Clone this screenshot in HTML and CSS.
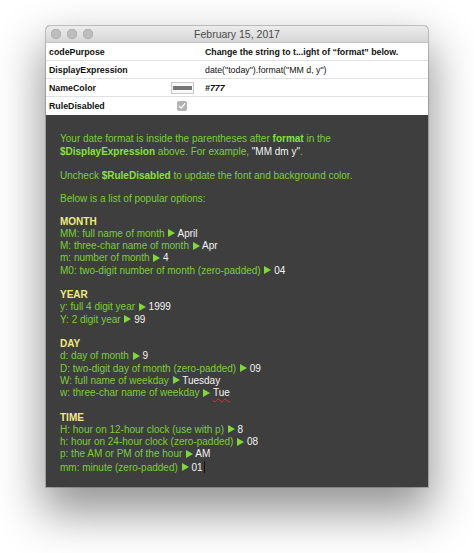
FILE: index.html
```html
<!DOCTYPE html>
<html>
<head>
<meta charset="utf-8">
<link rel="stylesheet" href="styles.css">
</head>
<body>
<div class="window">
  <div class="titlebar">
    <div class="lights"><span class="light"></span><span class="light"></span><span class="light"></span></div>
    <div class="title">February 15, 2017</div>
  </div>
  <div class="table">
    <div class="row">
      <div class="key">codePurpose</div>
      <div class="mid"></div>
      <div class="val bold">Change the string to t...ight of “format” below.</div>
    </div>
    <div class="row">
      <div class="key">DisplayExpression</div>
      <div class="mid"></div>
      <div class="val">date("today").format("MM d, y")</div>
    </div>
    <div class="row">
      <div class="key">NameColor</div>
      <div class="mid"><span class="swatch"><span class="swatch-fill"></span></span></div>
      <div class="val bold italic">#777</div>
    </div>
    <div class="row">
      <div class="key">RuleDisabled</div>
      <div class="mid"><span class="check"><svg width="8" height="8" viewBox="0 0 8 8"><path d="M1.3 4.2 L3.2 6.1 L6.8 1.6" fill="none" stroke="#fff" stroke-width="1.3" stroke-linecap="round" stroke-linejoin="round"/></svg></span></div>
      <div class="val"></div>
    </div>
  </div>
  <div class="note">
    <p class="para">Your date format is inside the parentheses after <b>format</b> in the<br><b>$DisplayExpression</b> above. For example, <span class="w">"MM dm y"</span>.</p>
    <p class="para">Uncheck <b>$RuleDisabled</b> to update the font and background color.</p>
    <p class="para">Below is a list of popular options:</p>

    <div class="group">
      <div class="head">MONTH</div>
      <div>MM: full name of month <span class="tri"></span> <span class="w">April</span></div>
      <div>M: three-char name of month <span class="tri"></span> <span class="w">Apr</span></div>
      <div>m: number of month <span class="tri"></span> <span class="w">4</span></div>
      <div>M0: two-digit number of month (zero-padded) <span class="tri"></span> <span class="w">04</span></div>
    </div>
    <div class="group">
      <div class="head">YEAR</div>
      <div>y: full 4 digit year <span class="tri"></span> <span class="w">1999</span></div>
      <div>Y: 2 digit year <span class="tri"></span> <span class="w">99</span></div>
    </div>
    <div class="group">
      <div class="head">DAY</div>
      <div>d: day of month <span class="tri"></span> <span class="w">9</span></div>
      <div>D: two-digit day of month (zero-padded) <span class="tri"></span> <span class="w">09</span></div>
      <div>W: full name of weekday <span class="tri"></span> <span class="w">Tuesday</span></div>
      <div>w: three-char name of weekday <span class="tri"></span> <span class="w spell">Tue</span></div>
    </div>
    <div class="group">
      <div class="head">TIME</div>
      <div>H: hour on 12-hour clock (use with p) <span class="tri"></span> <span class="w">8</span></div>
      <div>h: hour on 24-hour clock (zero-padded) <span class="tri"></span> <span class="w">08</span></div>
      <div>p: the AM or PM of the hour <span class="tri"></span> <span class="w">AM</span></div>
      <div>mm: minute (zero-padded) <span class="tri"></span> <span class="w">01</span><span class="caret"></span></div>
    </div>
  </div>
</div>
</body>
</html>
```
FILE: styles.css
```css
html, body {
  margin: 0;
  background: #ffffff;
}
body {
  min-height: 553px;
  box-sizing: border-box;
  padding: 26px 0 0 46px;
  font-family: "Liberation Sans", Arial, Helvetica, sans-serif;
}
.window {
  width: 382px;
  height: 461px;
  display: flex;
  flex-direction: column;
  background: #3e3e3e;
  box-shadow: 0 0 0 1px rgba(0,0,0,0.2), 0 22px 46px 4px rgba(0,0,0,0.42);
  border-radius: 4px 4px 0 0;
  overflow: hidden;
}
.titlebar {
  height: 17px;
  flex: none;
  position: relative;
  display: flex;
  align-items: center;
  justify-content: center;
  background: linear-gradient(#ececec, #d6d6d6);
  border-bottom: 1px solid #c4c4c4;
  box-sizing: border-box;
}
.lights {
  position: absolute;
  left: 5px;
  top: 3px;
  display: flex;
  gap: 6px;
}
.light {
  width: 10px;
  height: 10px;
  border-radius: 50%;
  background: #bdbdbd;
  box-shadow: inset 0 0 0 0.6px #a6a6a6;
}
.title {
  font-size: 10.5px;
  color: #4a4a4a;
}
.table {
  flex: none;
  background: #fff;
}
.row {
  display: flex;
  align-items: center;
  height: 18px;
  border-bottom: 1px solid #e2e2e2;
  box-sizing: border-box;
  font-size: 8.8px;
  color: #111;
}
.row:last-child {
  border-bottom: none;
}
.key {
  width: 116px;
  padding-left: 3px;
  font-weight: bold;
}
.mid {
  width: 34px;
  display: flex;
  justify-content: center;
  align-items: center;
}
.val {
  padding-left: 6px;
}
.bold { font-weight: bold; }
.italic { font-style: italic; }
.swatch {
  width: 23px;
  height: 12px;
  border: 1px solid #c8c8c8;
  background: #fafafa;
  box-sizing: border-box;
  display: flex;
  align-items: center;
  justify-content: center;
}
.swatch-fill {
  width: 19px;
  height: 4px;
  background: #777;
}
.check {
  width: 10px;
  height: 10px;
  border-radius: 2px;
  background: #b2b2b2;
  display: flex;
  align-items: center;
  justify-content: center;
}
.note {
  flex: 1;
  padding: 17px 14px 0 14px;
  font-size: 10px;
  line-height: 12.25px;
  color: #7acf38;
}
.para {
  margin: 0 0 10.5px 0;
  line-height: 13px;
}
.para b {
  color: #86e23c;
}
.group {
  margin-bottom: 12.25px;
}
.head {
  color: #f2ea80;
  font-weight: bold;
}
.tri {
  display: inline-block;
  width: 0;
  height: 0;
  border-left: 7px solid #7fd83a;
  border-top: 4px solid transparent;
  border-bottom: 4px solid transparent;
  vertical-align: -0.5px;
  margin-left: 1px;
}
.w {
  color: #f4f4f4;
}
.spell {
  text-decoration: underline wavy #e0303a;
  text-decoration-thickness: 1px;
  text-underline-offset: 2px;
}
.caret {
  display: inline-block;
  width: 1px;
  height: 12px;
  background: #111;
  vertical-align: -2px;
  margin-left: 1px;
}
```
